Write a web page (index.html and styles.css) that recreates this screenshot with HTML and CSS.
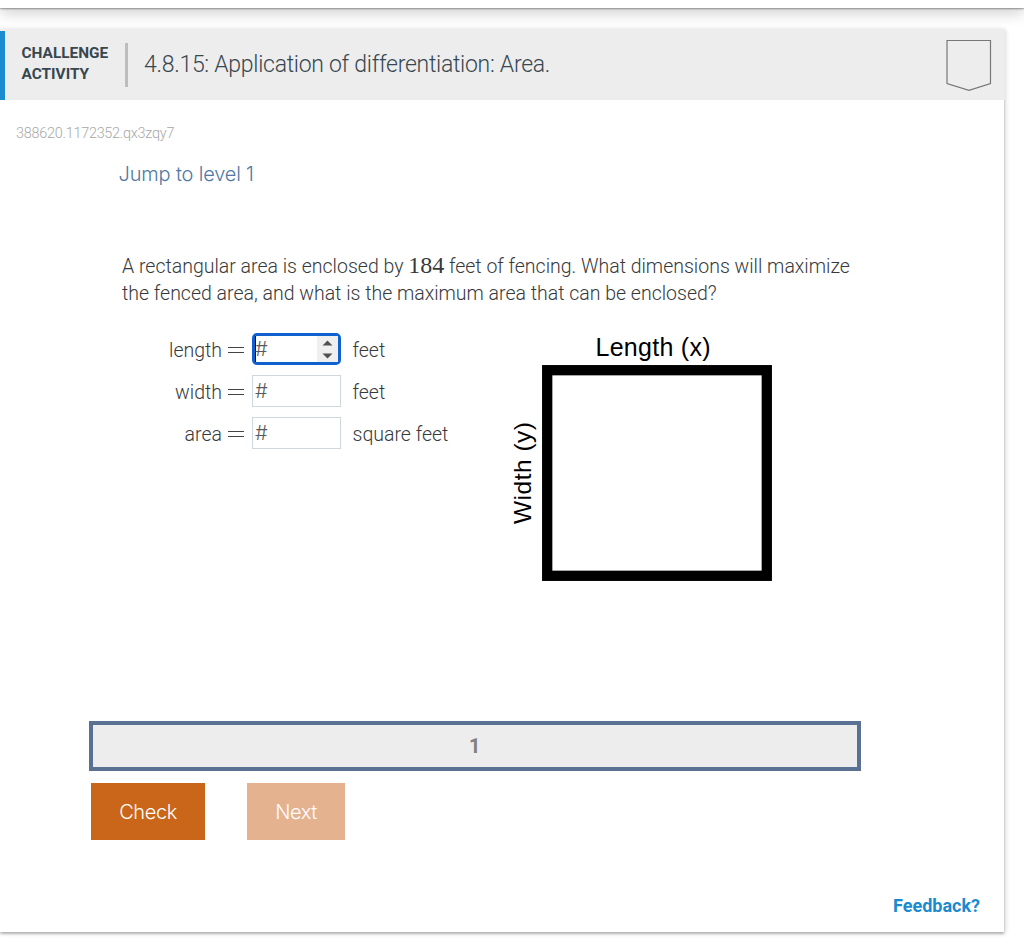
FILE: index.html
```html
<!DOCTYPE html>
<html lang="en">

<head>
    <meta charset="UTF-8">
    <meta name="viewport" content="width=device-width, initial-scale=1.0">
    <title>Challenge activity 4.8.15</title>
    <link rel="stylesheet" href="styles.css">
</head>

<body>
    <div class="topbar"></div>
    <div class="card">
        <div class="header">
            <div class="label">CHALLENGE<br>ACTIVITY</div>
            <div class="title">4.8.15: Application of differentiation: Area.</div>
            <svg class="badge" width="46" height="53" viewBox="0 0 46 53">
                <path d="M1 2.5H44.5V45.5L23 52.3L1 45.5Z" fill="none" stroke="#777" stroke-width="1.2" />
            </svg>
        </div>
        <div class="content-id">388620.1172352.qx3zqy7</div>
        <div class="jump"><a>Jump to level 1</a></div>

        <div class="question">
            A rectangular area is enclosed by <span class="math">184</span> feet of fencing. What dimensions will maximize<br>
            the fenced area, and what is the maximum area that can be enclosed?
        </div>

        <div class="work">
            <div class="answers">
                <div class="row">
                    <label>length</label>
                    <span class="equals"></span>
                    <div class="field focused">
                        <span class="caret"></span>
                        <input type="text" placeholder="#">
                        <svg class="spinner" width="21" height="26" viewBox="0 0 21 26">
                            <path d="M5.5 9.5L10.5 4.5L15.5 9.5ZM5.5 17.5H15.5L10.5 22.5Z" fill="#505050" />
                        </svg>
                    </div>
                    <span class="unit">feet</span>
                </div>
                <div class="row">
                    <label>width</label>
                    <span class="equals"></span>
                    <div class="field"><input type="text" placeholder="#"></div>
                    <span class="unit">feet</span>
                </div>
                <div class="row">
                    <label>area</label>
                    <span class="equals"></span>
                    <div class="field"><input type="text" placeholder="#"></div>
                    <span class="unit">square feet</span>
                </div>
            </div>
            <svg class="figure" width="270" height="255" viewBox="0 0 270 255">
                <text x="91.5" y="25.5" font-size="25" textLength="115">Length (x)</text>
                <text transform="translate(27 194) rotate(-90)" font-size="24.5" textLength="102">Width (y)</text>
                <rect x="43.2" y="40.2" width="219.6" height="205.6" fill="none" stroke="#000" stroke-width="10.3" />
            </svg>
        </div>

        <div class="level">1</div>
        <div class="buttons">
            <button class="check">Check</button>
            <button class="next">Next</button>
        </div>
        <div class="feedback"><a>Feedback?</a></div>
    </div>
</body>

</html>
```
FILE: styles.css
```css
body {
    margin: 0;
    min-height: 952px;
    background: #fff;
    font-family: Roboto, sans-serif;
    font-weight: 300;
    color: #37474f;
}

.topbar {
    height: 8px;
    margin-bottom: 21px;
    box-shadow: 0 1px 2px rgba(0, 0, 0, 0.4), 0 3px 15px rgba(0, 0, 0, 0.3);
}

.card {
    width: 1004px;
    height: 903px;
    background: #fff;
    box-shadow: 0 2px 2px rgba(0, 0, 0, 0.2), 1px 1px 5px rgba(0, 0, 0, 0.2);
}

.header {
    display: flex;
    align-items: center;
    box-sizing: border-box;
    width: 1005px;
    height: 71px;
    padding-right: 13px;
    background: linear-gradient(#1a8bcf, #1a8bcf) 0 2px / 5px 69px no-repeat #ededed;
}

.label {
    box-sizing: border-box;
    width: 128px;
    height: 44px;
    padding-left: 21.5px;
    border-right: 3px solid #bdbdbd;
    font-size: 15.4px;
    font-weight: 700;
    line-height: 21.5px;
}

.title {
    flex: 1;
    padding-left: 16px;
    font-size: 23px;
    line-height: 28px;
    letter-spacing: -0.28px;
}

.content-id {
    padding: 24px 16px 0;
    font-size: 14.4px;
    line-height: 20px;
    letter-spacing: -0.24px;
    color: #a8a8a8;
}

.jump {
    padding: 17px 118.5px 0;
    font-family: Inter, "Liberation Sans", sans-serif;
    font-size: 20px;
    line-height: 26px;
    letter-spacing: -0.17px;
    color: #5078a2;
}

.question {
    padding: 66px 122px 0;
    font-size: 19.5px;
    line-height: 27px;
    color: #37393b;
    white-space: nowrap;
}

.math {
    font-family: "Liberation Serif", "Times New Roman", serif;
    font-size: 24px;
    font-weight: 400;
    line-height: 1;
}

.work {
    display: flex;
    height: 414px;
    padding-top: 23px;
    box-sizing: border-box;
}

.answers {
    display: flex;
    flex-direction: column;
    gap: 10px;
    width: 504px;
    padding-top: 3px;
}

.row {
    display: flex;
    align-items: center;
    height: 32px;
    font-size: 19.5px;
    color: #37393b;
}

.row label {
    width: 222px;
    padding-top: 2px;
    text-align: right;
}

.equals {
    width: 16px;
    height: 4px;
    margin: 2px 8px 0 6px;
    border-top: 1px solid #444;
    border-bottom: 1px solid #444;
}

.field {
    display: flex;
    align-items: center;
    box-sizing: border-box;
    width: 89px;
    height: 32px;
    border: 1px solid #cfd8dc;
    padding-left: 2px;
}

.field input {
    flex: 1;
    min-width: 0;
    border: 0;
    padding: 0;
    outline: none;
    background: none;
    font-family: Inter, "Liberation Sans", sans-serif;
    font-size: 20px;
    font-weight: 300;
}

.field input::placeholder {
    color: #5a5a5a;
}

.focused {
    border: 3px solid #1060d0;
    border-radius: 5px;
    padding-left: 0;
}

.caret {
    width: 1px;
    height: 26px;
    margin-right: -1px;
    background: #000;
}

.spinner {
    background: #efefef;
}

.unit {
    margin-left: 11.5px;
    padding-top: 2px;
}

.figure {
    font-family: "Liberation Sans", Arial, sans-serif;
    font-weight: 400;
}

.level {
    box-sizing: border-box;
    width: 772.5px;
    height: 50px;
    margin-left: 88.5px;
    border: 4px solid #5b7194;
    background: #ededed;
    font-size: 20px;
    font-weight: 700;
    line-height: 42px;
    text-align: center;
    color: #808080;
}

.buttons {
    display: flex;
    gap: 42px;
    padding: 12px 91px 0;
}

.buttons button {
    height: 57px;
    padding: 0;
    border: 0;
    font-family: Inter, "Liberation Sans", sans-serif;
    font-size: 20px;
    font-weight: 300;
    letter-spacing: -0.4px;
    color: #fff;
}

.buttons .check {
    width: 114px;
    background: #c96619;
}

.buttons .next {
    width: 98px;
    background: #e5b28f;
}

.feedback {
    padding: 53px 24px 0;
    font-size: 18px;
    font-weight: 700;
    line-height: 26px;
    text-align: right;
    color: #1a8bcf;
}
```
